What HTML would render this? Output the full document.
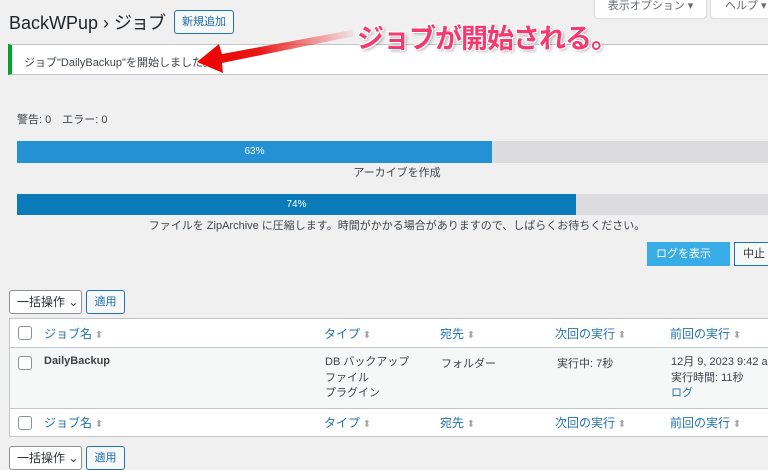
<!DOCTYPE html>
<html><head><meta charset="utf-8"><style>
body{margin:0;width:768px;height:459px;overflow:hidden;background:#f0f0f1;font-family:"Liberation Sans","Noto Sans CJK JP",sans-serif;color:#3c434a;font-size:11px;position:relative}
.a{position:absolute}
.btn{position:absolute;border:1px solid #2271b1;border-radius:3px;color:#2271b1;background:#f6f7f7;font-size:11px;text-align:center;box-sizing:border-box}
.sel{position:absolute;border:1px solid #8c8f94;border-radius:3px;background:#fff;box-sizing:border-box;font-size:12px;padding-left:7px;color:#2c3338}
.cb{position:absolute;width:12px;height:12px;border:1px solid #8c8f94;border-radius:3px;background:#fff}
.h{position:absolute;color:#2271b1;font-size:12px}
.h:after{content:" ⬍";color:#a7aaad;font-size:10px}
</style></head><body>
<div class="a" style="left:9px;top:9px;font-size:18px;color:#1d2327;white-space:nowrap">BackWPup › <span style="letter-spacing:-1px">ジョブ</span></div>
<div class="btn" style="left:174px;top:10px;width:60px;height:24px;line-height:22px">新規追加</div>
<div class="a" style="left:594px;top:-4px;width:111px;height:21px;background:#fff;border:1px solid #dcdcde;border-radius:0 0 4px 4px;font-size:11px;line-height:19px;text-align:center;color:#646970">表示オプション ▾</div>
<div class="a" style="left:710px;top:-4px;width:70px;height:21px;background:#fff;border:1px solid #dcdcde;border-radius:0 0 4px 4px;font-size:11px;line-height:19px;padding-left:14px;color:#646970">ヘルプ ▾</div>
<div class="a" style="left:8px;top:44px;width:770px;height:31px;background:#fff;border:1px solid #c3c4c7;border-left:4px solid #00a32a;box-sizing:border-box"></div>
<div class="a" style="left:24px;top:54px;font-size:11px">ジョブ"DailyBackup"を開始しました。</div>
<div class="a" style="left:17px;top:111px">警告: 0　エラー: 0</div>
<div class="a" style="left:17px;top:141px;width:760px;height:22px;background:#dcdcde"></div>
<div class="a" style="left:17px;top:141px;width:475px;height:22px;background:#2391d3;color:#fff;text-align:center;line-height:22px;font-size:10px">63%</div>
<div class="a" style="left:17px;top:164px;width:760px;text-align:center">アーカイブを作成</div>
<div class="a" style="left:17px;top:194px;width:760px;height:21px;background:#dcdcde"></div>
<div class="a" style="left:17px;top:194px;width:559px;height:21px;background:#0a7ab8;color:#fff;text-align:center;line-height:21px;font-size:10px">74%</div>
<div class="a" style="left:17px;top:217px;width:760px;text-align:center">ファイルを ZipArchive に圧縮します。時間がかかる場合がありますので、しばらくお待ちください。</div>
<div class="a" style="left:647px;top:242px;width:83px;height:24px;background:#38ace6;color:#fff;line-height:24px;padding-left:9px;box-sizing:border-box">ログを表示</div>
<div class="a" style="left:734px;top:242px;width:40px;height:24px;background:#f6f7f7;border:1px solid #2271b1;line-height:22px;padding-left:8px;box-sizing:border-box;color:#2c3338">中止</div>
<div class="sel" style="left:9px;top:290px;width:73px;height:24px;line-height:22px">一括操作 ⌄</div>
<div class="btn" style="left:86px;top:290px;width:39px;height:24px;line-height:22px">適用</div>
<div class="a" style="left:9px;top:318px;width:770px;height:119px;background:#fff;border:1px solid #c3c4c7;box-sizing:border-box"></div>
<div class="a" style="left:10px;top:347px;width:768px;height:60px;background:#f6f7f7;border-top:1px solid #c3c4c7;border-bottom:1px solid #c3c4c7"></div>
<div class="cb" style="left:18px;top:326px"></div>
<div class="cb" style="left:18px;top:356px"></div>
<div class="cb" style="left:18px;top:416px"></div>
<div class="h" style="left:44px;top:325px">ジョブ名</div><div class="h" style="left:324px;top:325px">タイプ</div><div class="h" style="left:440px;top:325px">宛先</div><div class="h" style="left:555px;top:325px">次回の実行</div><div class="h" style="left:670px;top:325px">前回の実行</div>
<div class="h" style="left:44px;top:414px">ジョブ名</div><div class="h" style="left:324px;top:414px">タイプ</div><div class="h" style="left:440px;top:414px">宛先</div><div class="h" style="left:555px;top:414px">次回の実行</div><div class="h" style="left:670px;top:414px">前回の実行</div>
<div class="a" style="left:44px;top:355px;font-weight:bold;font-size:11px">DailyBackup</div>
<div class="a" style="left:325px;top:355px;line-height:15.5px">DB バックアップ<br>ファイル<br>プラグイン</div>
<div class="a" style="left:441px;top:355px">フォルダー</div>
<div class="a" style="left:557px;top:355px">実行中: 7秒</div>
<div class="a" style="left:671px;top:355px;line-height:15.5px;white-space:nowrap">12月 9, 2023 9:42 am<br>実行時間: 11秒<br><span style="color:#2271b1">ログ</span></div>
<div class="sel" style="left:9px;top:446px;width:73px;height:24px;line-height:22px">一括操作 ⌄</div>
<div class="btn" style="left:86px;top:446px;width:39px;height:24px;line-height:22px">適用</div>
<svg class="a" style="left:0;top:0" width="768" height="100"><defs><linearGradient id="g" x1="350" y1="30" x2="200" y2="65" gradientUnits="userSpaceOnUse"><stop offset="0" stop-color="#f03030" stop-opacity="0.1"/><stop offset="0.6" stop-color="#e81818"/><stop offset="1" stop-color="#e00"/></linearGradient></defs>
<polygon points="352,30 222,54 219,44 197,62 223,73 222,63 355,36" fill="url(#g)"/></svg>
<div class="a" style="left:357px;top:17px;font-size:27px;font-weight:bold;color:#f43a6e;letter-spacing:-1px;text-shadow:1px 1px 0 #fff,-1px -1px 0 #fff,1px -1px 0 #fff,-1px 1px 0 #fff,2px 2px 3px rgba(0,0,0,.3);white-space:nowrap">ジョブが開始される。</div>
</body></html>
